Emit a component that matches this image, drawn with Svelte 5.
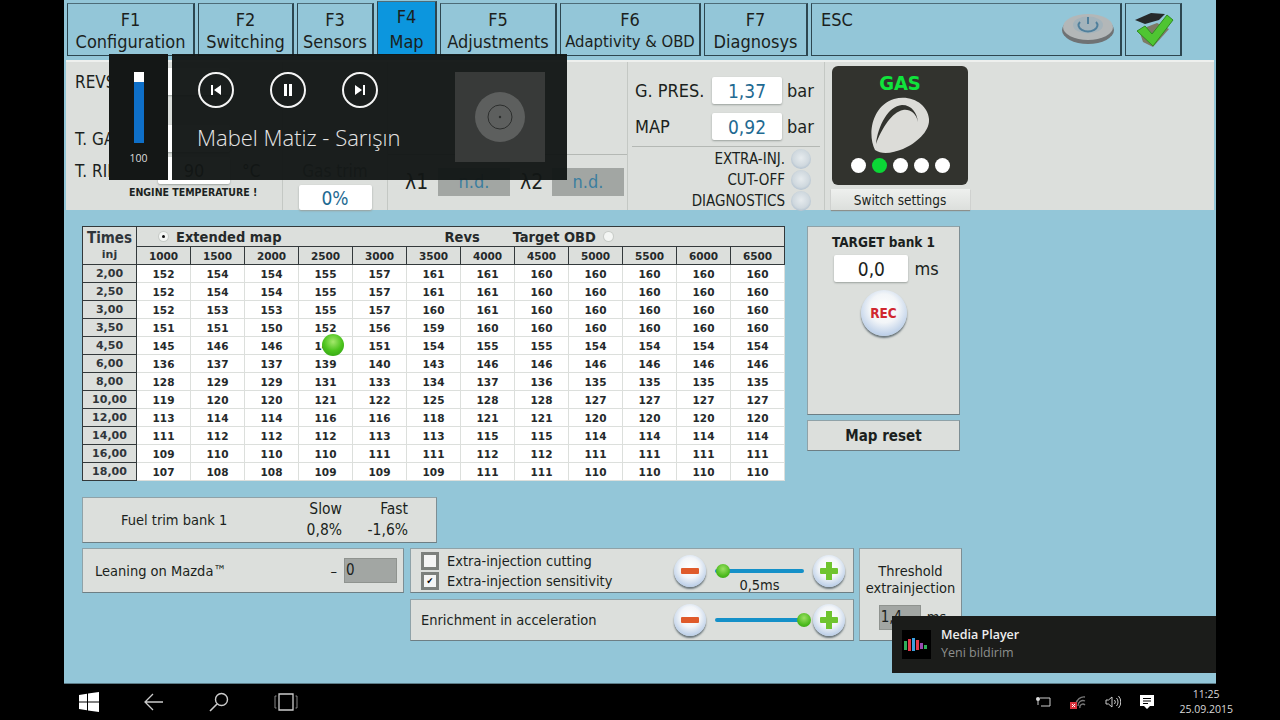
<script lang="ts">
	const tabs = [
		{ key: 'F1', label: 'Configuration' },
		{ key: 'F2', label: 'Switching' },
		{ key: 'F3', label: 'Sensors' },
		{ key: 'F4', label: 'Map', active: true },
		{ key: 'F5', label: 'Adjustments' },
		{ key: 'F6', label: 'Adaptivity & OBD', small: true },
		{ key: 'F7', label: 'Diagnosys' }
	];

	const revs = [1000, 1500, 2000, 2500, 3000, 3500, 4000, 4500, 5000, 5500, 6000, 6500];

	const map = [
		['2,00', 152, 154, 154, 155, 157, 161, 161, 160, 160, 160, 160, 160],
		['2,50', 152, 154, 154, 155, 157, 161, 161, 160, 160, 160, 160, 160],
		['3,00', 152, 153, 153, 155, 157, 160, 161, 160, 160, 160, 160, 160],
		['3,50', 151, 151, 150, 152, 156, 159, 160, 160, 160, 160, 160, 160],
		['4,50', 145, 146, 146, 148, 151, 154, 155, 155, 154, 154, 154, 154],
		['6,00', 136, 137, 137, 139, 140, 143, 146, 146, 146, 146, 146, 146],
		['8,00', 128, 129, 129, 131, 133, 134, 137, 136, 135, 135, 135, 135],
		['10,00', 119, 120, 120, 121, 122, 125, 128, 128, 127, 127, 127, 127],
		['12,00', 113, 114, 114, 116, 116, 118, 121, 121, 120, 120, 120, 120],
		['14,00', 111, 112, 112, 112, 113, 113, 115, 115, 114, 114, 114, 114],
		['16,00', 109, 110, 110, 110, 111, 111, 112, 112, 111, 111, 111, 111],
		['18,00', 107, 108, 108, 109, 109, 109, 111, 111, 110, 110, 110, 110]
	];

	const lights = ['EXTRA-INJ.', 'CUT-OFF', 'DIAGNOSTICS'];
	const positions = [false, true, false, false, false];
</script>

<div class="desktop">
	<main class="app">
		<nav class="tabs">
			{#each tabs as tab}
				<button class="tab" class:active={tab.active} class:small={tab.small}>
					<span>{tab.key}</span>
					<span class="tab-label">{tab.label}</span>
				</button>
			{/each}
			<div class="tab esc">
				<span>ESC</span>
				<svg class="power" viewBox="0 0 54 36" width="54" height="36">
					<ellipse cx="27" cy="20" rx="26" ry="14" fill="#6f7274" />
					<ellipse cx="27" cy="17" rx="25" ry="13" fill="#b3b7b8" />
					<ellipse cx="27" cy="15" rx="15" ry="8.5" fill="#a3b3bb" />
					<path d="M19 12a9.5 6 0 1 0 16 0" fill="none" stroke="#4f7f9c" stroke-width="2" />
					<path d="M27 7v7" stroke="#4f7f9c" stroke-width="2" />
				</svg>
			</div>
			<div class="tab check">
				<svg viewBox="0 0 44 42" width="44" height="42">
					<path d="M4 11 20 4l14 1-6 6-14 4z" fill="#26292a" />
					<path d="M8 21 26 14l12 6-16 18-10-5z" fill="#7e7a66" />
					<path d="M6 22l8-5 7 8L36 6l6 5-20 26z" fill="#4fc532" stroke="#2f8d22" />
				</svg>
			</div>
		</nav>

		<section class="status">
			<div class="temps">
				<div class="reading revs-row">
					<span class="name">REVS</span><span class="box"></span>
				</div>
				<div class="reading">
					<span class="name">T. GAS</span><span class="box"></span>
				</div>
				<div class="reading rid">
					<span class="name">T. RID.</span><span class="box">90</span><span class="unit">°C</span>
				</div>
				<p class="warning">ENGINE TEMPERATURE !</p>
			</div>

			<div class="trim">
				<span class="trim-title">Gas trim</span>
				<span class="box trim-box">0%</span>
			</div>

			<div class="lambda">
				<span class="lambda-name">λ1</span><span class="nd">n.d.</span>
				<span class="lambda-name second">λ2</span><span class="nd">n.d.</span>
			</div>

			<div class="pressure">
				<div class="pres-row">
					<span class="pres-name">G. PRES.</span><span class="box blue">1,37</span><span>bar</span>
				</div>
				<div class="pres-row">
					<span class="pres-name">MAP</span><span class="box blue">0,92</span><span>bar</span>
				</div>
				<div class="lights">
					{#each lights as light}
						<div class="light-row"><span>{light}</span><i class="led"></i></div>
					{/each}
				</div>
			</div>

			<div class="fuel">
				<div class="gas-card">
					<b>GAS</b>
					<svg viewBox="0 0 64 58" width="64" height="58">
						<path d="M7 54C-1 38 4 10 26 3c18-5 34 6 35 20 1 12-12 24-26 30-10 4-21 6-28 1z" fill="#dcdcd8" />
						<path d="M8 48C10 30 20 10 34 9c10 0 15 8 16 17-2-9-8-13-15-12C24 16 14 32 8 48z" fill="#32332e" />
					</svg>
					<div class="dots">
						{#each positions as on}
							<i class:on></i>
						{/each}
					</div>
				</div>
				<button class="switch">Switch settings</button>
			</div>
		</section>

		<section class="map-row">
			<div class="map-wrap">
				<table class="map">
					<thead>
						<tr>
							<th class="axis times" rowspan="2"><strong>Times</strong><span>inj</span></th>
							<th class="title" colspan="12">
								<div class="title-row">
									<i class="radio on"></i>
									<span class="ext">Extended map</span>
									<span class="rv">Revs</span>
									<span class="obd">Target OBD</span>
									<i class="radio"></i>
								</div>
							</th>
						</tr>
						<tr>
							{#each revs as r}<th class="rev">{r}</th>{/each}
						</tr>
					</thead>
					<tbody>
						{#each map as row}
							<tr>
								{#each row as v, i}
									{#if i === 0}<th class="axis">{v}</th>{:else}<td>{v}</td>{/if}
								{/each}
							</tr>
						{/each}
					</tbody>
				</table>
				<i class="cursor"></i>
			</div>

			<div class="target-col">
				<div class="panel target">
					<b>TARGET bank 1</b>
					<div class="target-val"><span class="box">0,0</span><span>ms</span></div>
					<button class="round rec">REC</button>
				</div>
				<button class="panel reset">Map reset</button>
			</div>
		</section>

		<section class="bottom">
			<div class="panel fuel-trim">
				<span class="ft-name">Fuel trim bank 1</span>
				<div class="ft-col"><span>Slow</span><span>0,8%</span></div>
				<div class="ft-col"><span>Fast</span><span>-1,6%</span></div>
			</div>

			<div class="controls">
				<div class="panel leaning">
					<span>Leaning on Mazda™</span>
					<span class="dash">–</span>
					<span class="grey-box">0</span>
				</div>

				<div class="mid">
					<div class="panel extra">
						<div class="checks">
							<label><i class="cb"></i>Extra-injection cutting</label>
							<label><i class="cb ticked">✔</i>Extra-injection sensitivity</label>
						</div>
						<div class="stepper">
							<button class="round step minus" aria-label="less"><i></i></button>
							<div class="track"><i class="thumb low"></i><span class="slider-val">0,5ms</span></div>
							<button class="round step plus" aria-label="more"><i></i></button>
						</div>
					</div>
					<div class="panel extra enrich">
						<span>Enrichment in acceleration</span>
						<div class="stepper">
							<button class="round step minus" aria-label="less"><i></i></button>
							<div class="track"><i class="thumb high"></i></div>
							<button class="round step plus" aria-label="more"><i></i></button>
						</div>
					</div>
				</div>

				<div class="panel threshold">
					<span>Threshold<br />extrainjection</span>
					<div class="th-val"><span class="grey-box">1,4</span><span>ms</span></div>
				</div>
			</div>
		</section>
	</main>

	<footer class="taskbar">
		<div class="task-left">
			<svg viewBox="0 0 20 20" width="20" height="20"><path d="M0 3l8-1.2V9.400H0zM9 1.600 20 0v9.400H9zM0 10.600h8v7.600l-8-1.200zM9 10.600h11V20L9 18.400z" fill="#fff" /></svg>
			<svg viewBox="0 0 20 18" width="20" height="18"><path d="M9 1 1 9l8 8M1 9h18" fill="none" stroke="#ccc" stroke-width="1.300" /></svg>
			<svg viewBox="0 0 20 20" width="20" height="20"><circle cx="12.500" cy="7.500" r="6" fill="none" stroke="#ccc" stroke-width="1.400" /><path d="M8 12 1 19" stroke="#ccc" stroke-width="1.600" /></svg>
			<svg viewBox="0 0 24 18" width="24" height="18"><path d="M5 1h14v16H5z" fill="none" stroke="#ccc" stroke-width="1.300" /><path d="M2.500 3H1v12h1.500M21.500 3H23v12h-1.500" fill="none" stroke="#888" /></svg>
		</div>
		<div class="tray">
			<svg viewBox="0 0 16 12" width="16" height="12"><path d="M5 2h10v8H6" fill="none" stroke="#ccc" /><circle cx="3" cy="3" r="2" fill="#ddd" /><path d="M3 4v5" stroke="#ccc" /></svg>
			<svg viewBox="0 0 18 14" width="18" height="14"><path d="M7 9a8 8 0 0 1 9-7M9 11a5 5 0 0 1 7-5M11 13a3 3 0 0 1 5-3" fill="none" stroke="#777" stroke-width="1.300" /><rect x="1" y="7" width="7" height="7" fill="#d8323c" /><path d="M3 9l3 3M6 9l-3 3" stroke="#fff" /></svg>
			<svg viewBox="0 0 16 14" width="16" height="14"><path d="M1 5h2.500L7 2v10L3.500 9H1z" fill="none" stroke="#ccc" /><path d="M9.500 5a3 3 0 0 1 0 4M11.500 3a6 6 0 0 1 0 8M13.500 1a9 9 0 0 1 0 12" fill="none" stroke="#ccc" /></svg>
			<svg viewBox="0 0 16 16" width="16" height="16"><path d="M1 1h14v11h-4l-3 3-3-3H1z" fill="#fff" /><path d="M4 4.500h8M4 7h8M4 9.500h5" stroke="#000" /></svg>
			<div class="clock"><span>11:25</span><span>25.09.2015</span></div>
		</div>
	</footer>

	<aside class="volume">
		<div class="vol-bar"><i></i></div>
		<span>100</span>
	</aside>

	<aside class="media">
		<div class="media-left">
			<div class="media-btns">
				<button aria-label="previous"><svg viewBox="0 0 14 14" width="14" height="14"><path d="M2 2h2v10H2zM12 2v10L5 7z" fill="#fff" /></svg></button>
				<button aria-label="pause"><svg viewBox="0 0 14 14" width="14" height="14"><path d="M3 1h3v12H3zM8 1h3v12H8z" fill="#fff" /></svg></button>
				<button aria-label="next"><svg viewBox="0 0 14 14" width="14" height="14"><path d="M2 2v10l7-5zM10 2h2v10h-2z" fill="#fff" /></svg></button>
			</div>
			<p>Mabel Matiz - Sarışın</p>
		</div>
		<div class="album">
			<svg viewBox="0 0 50 50" width="50" height="50">
				<circle cx="25" cy="25" r="25" fill="#5d5f5e" />
				<circle cx="25" cy="25" r="12" fill="none" stroke="#2c2e2d" stroke-width="1" />
				<circle cx="25" cy="25" r="1.200" fill="#2c2e2d" />
			</svg>
		</div>
	</aside>

	<aside class="toast">
		<div class="toast-icon">
			<svg viewBox="0 0 28 28" width="28" height="28">
				<rect x="2" y="11" width="3" height="9" fill="#2fae5a" />
				<rect x="6" y="9" width="3" height="12" fill="#e23a4a" />
				<rect x="10" y="8" width="3" height="13" fill="#3aa0e0" />
				<rect x="14" y="10" width="3" height="10" fill="#e23a4a" />
				<rect x="18" y="13" width="3" height="6" fill="#9a4ab0" />
				<rect x="22" y="15" width="3" height="4" fill="#2fae5a" />
			</svg>
		</div>
		<div class="toast-text">
			<b>Media Player</b>
			<span>Yeni bildirim</span>
		</div>
	</aside>
</div>

<style>
	:global(body) {
		margin: 0;
		background: #000;
	}
	.desktop {
		position: relative;
		width: 1280px;
		height: 720px;
		overflow: hidden;
		background: #000;
		font-family: 'DejaVu Sans Condensed', 'DejaVu Sans', sans-serif;
		color: #1b1f20;
	}
	.app {
		margin-left: 64px;
		width: 1152px;
		height: 684px;
		background: #93c6d8;
		border-bottom: 1px solid #5c7c88;
		box-sizing: border-box;
		padding-top: 3px;
	}
	button {
		font-family: inherit;
		color: inherit;
		padding: 0;
		margin: 0;
	}

	/* tab bar */
	.tabs {
		display: grid;
		grid-template-columns: 128px 96px 77px 60px 117px 141px 104px 311px 57px;
		gap: 3px;
		margin-left: 3px;
		height: 53px;
	}
	.tab {
		display: flex;
		flex-direction: column;
		align-items: center;
		justify-content: flex-start;
		box-sizing: border-box;
		height: 53px;
		padding-top: 5px;
		background: #93c6d8;
		border: 1px solid #2d4650;
		border-top-color: #4d6c78;
		border-right-width: 2px;
		font-size: 18px;
		line-height: 22px;
		white-space: nowrap;
	}
	.tab.active {
		height: 54px;
		margin-top: -2px;
		background: #0c96de;
		padding-top: 4px;
	}
	.tab.active .tab-label {
		margin-top: 3px;
	}
	.tab.small .tab-label {
		font-size: 16.500px;
	}
	.esc {
		position: relative;
		align-items: flex-start;
		padding-left: 9px;
	}
	.power {
		position: absolute;
		right: 5px;
		top: 6px;
	}
	.check {
		justify-content: center;
		padding-top: 0;
	}

	/* status strip */
	.status {
		display: flex;
		box-sizing: border-box;
		height: 150px;
		margin: 4px 2px 0;
		background: #dcdfdc;
		border-top: 2px solid #eef0ee;
		font-size: 17px;
	}
	.box {
		display: flex;
		align-items: center;
		justify-content: center;
		box-sizing: border-box;
		background: #fff;
		border-radius: 2px;
		box-shadow: 0 1px 2px #9aa09c;
		font-size: 18px;
	}
	.box.blue {
		color: #1f6a92;
	}
	.temps {
		position: relative;
		box-sizing: border-box;
		width: 217px;
		padding: 6px 0 0 9px;
		border-right: 1px solid #c4c8c4;
	}
	.reading {
		display: flex;
		align-items: center;
		height: 27px;
	}
	.reading + .reading {
		margin-top: 5px;
	}
	.revs-row {
		margin-bottom: 30px;
	}
	.name {
		width: 83px;
		flex: none;
	}
	.reading .box {
		width: 72px;
		height: 27px;
	}
	.unit {
		margin-left: 12px;
	}
	.warning {
		margin: 2px 0 0 54px;
		font-size: 10.500px;
		font-weight: 700;
		font-family: 'DejaVu Sans', sans-serif;
		white-space: nowrap;
		transform-origin: left;
		transform: scaleX(0.9);
	}
	.trim {
		display: flex;
		flex-direction: column;
		align-items: center;
		justify-content: flex-end;
		box-sizing: border-box;
		width: 105px;
		padding-bottom: 0;
		border-right: 1px solid #c4c8c4;
		color: #5d6260;
	}
	.trim-title {
		margin-bottom: 4px;
	}
	.trim-box {
		width: 73px;
		height: 25px;
		color: #1f6a92;
		font-size: 19px;
	}
	.lambda {
		display: flex;
		align-items: center;
		align-self: flex-end;
		box-sizing: border-box;
		width: 239px;
		height: 56px;
		margin-bottom: 0;
		padding: 13px 3px 14px 17px;
		border-top: 1px solid #b4b8b4;
		font-size: 21px;
	}
	.lambda-name {
		width: 33px;
		flex: none;
	}
	.lambda-name.second {
		width: 32px;
		margin-left: 10px;
	}
	.nd {
		width: 72px;
		height: 28px;
		flex: none;
		background: #a2a6a3;
		color: #3c7e9f;
		font-size: 18px;
		line-height: 28px;
		text-align: center;
	}
	.pressure {
		box-sizing: border-box;
		width: 198px;
		padding: 15px 4px 0 4px;
		border-left: 1px solid #c4c8c4;
		border-right: 1px solid #c4c8c4;
		font-size: 18px;
	}
	.pres-row {
		display: flex;
		align-items: center;
		height: 27px;
		margin-bottom: 9px;
		padding-left: 3px;
	}
	.pres-row + .pres-row {
		margin-bottom: 0;
	}
	.pres-name {
		width: 77px;
		flex: none;
	}
	.pres-row .box {
		width: 70px;
		height: 27px;
		margin-right: 5px;
		font-size: 19px;
	}
	.lights {
		margin-top: 6px;
		padding-top: 1px;
		border-top: 1px solid #b4b8b4;
		font-size: 15px;
	}
	.light-row {
		display: flex;
		align-items: center;
		justify-content: flex-end;
		gap: 6px;
		height: 21px;
		padding-right: 9px;
	}
	.led {
		width: 20px;
		height: 20px;
		border-radius: 50%;
		background: radial-gradient(circle at 50% 45%, #e6ebee 0, #cfd8de 55%, #8da4bc 100%);
	}
	.fuel {
		display: flex;
		flex-direction: column;
		align-items: center;
		width: 138px;
		margin-left: 6px;
		padding-top: 4px;
	}
	.gas-card {
		display: flex;
		flex-direction: column;
		align-items: center;
		width: 136px;
		height: 119px;
		background: #32332e;
		border-radius: 6px;
		color: #10e43c;
	}
	.gas-card b {
		font-size: 20px;
		line-height: 24px;
		margin-top: 5px;
	}
	.gas-card svg {
		margin-top: 1px;
	}
	.dots {
		display: flex;
		gap: 6px;
		margin-top: 4px;
	}
	.dots i {
		width: 15px;
		height: 15px;
		border-radius: 50%;
		background: #fff;
	}
	.dots i.on {
		background: #0bd636;
	}
	.switch {
		width: 139px;
		height: 21px;
		margin-top: 4px;
		border: 0;
		background: linear-gradient(#eef0ee, #dcdfdc);
		box-shadow: 0 1px 1px #8c908c;
		font-size: 13.500px;
	}

	/* map table */
	.map-row {
		display: flex;
		align-items: flex-start;
		gap: 22px;
		margin: 16px 0 0 18px;
	}
	.map-wrap {
		position: relative;
	}
	.map {
		border-collapse: collapse;
		table-layout: fixed;
		width: 703px;
		font-family: 'DejaVu Sans', sans-serif;
		font-size: 10.500px;
		font-weight: 700;
	}
	.map th,
	.map td {
		box-sizing: border-box;
		height: 18px;
		padding: 0;
		text-align: center;
		line-height: 16px;
		color: #25292a;
	}
	.map td {
		background: #fff;
		border: 1px solid #dcdfdc;
		width: 54px;
	}
	.map th.axis {
		width: 54px;
		background: #dcdfdc;
		border: 1px solid #33393b;
		color: #30353a;
		font-size: 11px;
	}
	.map th.times {
		padding-top: 2px;
		height: 38px;
		vertical-align: top;
	}
	.times strong {
		display: block;
		font-family: 'DejaVu Sans Condensed', 'DejaVu Sans', sans-serif;
		font-size: 15px;
		line-height: 18px;
	}
	.times span {
		display: block;
		line-height: 16px;
	}
	.map th.title {
		height: 20px;
		background: #dcdfdc;
		border: 1px solid #33393b;
		border-left: 0;
	}
	.title-row {
		display: flex;
		align-items: center;
		padding-left: 22px;
		font-family: 'DejaVu Sans Condensed', 'DejaVu Sans', sans-serif;
		font-size: 14.500px;
	}
	.radio {
		width: 9px;
		height: 9px;
		border-radius: 50%;
		background: #f4f6f4;
		box-shadow: 0 0 0 1px #c8ccc8;
		position: relative;
	}
	.radio.on::after {
		content: '';
		position: absolute;
		inset: 3px;
		border-radius: 50%;
		background: #111;
	}
	.ext {
		margin-left: 8px;
	}
	.rv {
		margin-left: 163px;
	}
	.obd {
		margin-left: 33px;
		margin-right: 8px;
	}
	.map th.rev {
		background: #dcdfdc;
		border: 1px solid #33393b;
		border-top-color: #33393b;
		width: 54px;
	}
	.cursor {
		position: absolute;
		left: 240px;
		top: 108px;
		width: 22px;
		height: 22px;
		border-radius: 50%;
		background: radial-gradient(circle at 50% 35%, #a4e86c 0, #4dc41e 50%, #2a9a10 100%);
	}

	.panel {
		box-sizing: border-box;
		background: #dcdfdc;
		border: 1px solid #8fa2a8;
		border-bottom-color: #6d7e84;
		border-right-color: #7d8e94;
	}
	.target-col {
		display: flex;
		flex-direction: column;
		gap: 5px;
		width: 153px;
	}
	.target {
		display: flex;
		flex-direction: column;
		align-items: center;
		height: 189px;
		padding-top: 5px;
		font-size: 13px;
	}
	.target b {
		font-size: 13.500px;
		line-height: 20px;
	}
	.target-val {
		display: flex;
		align-items: center;
		gap: 6px;
		margin: 3px 0 0 6px;
		font-size: 18px;
	}
	.target-val .box {
		width: 74px;
		height: 27px;
		font-size: 19px;
	}
	.round {
		border: 0;
		border-radius: 50%;
		background: radial-gradient(circle at 50% 40%, #fff 0, #f2f5f8 40%, #bccfe8 75%, #7c93b4 100%);
		box-shadow: 0 2px 2px #68747a;
	}
	.rec {
		width: 46px;
		height: 46px;
		margin-top: 8px;
		color: #d0272f;
		font-size: 13.500px;
		font-weight: 700;
	}
	.reset {
		height: 31px;
		font-size: 15px;
		font-weight: 700;
	}

	/* bottom panels */
	.bottom {
		margin: 16px 0 0 18px;
		font-size: 15px;
	}
	.fuel-trim {
		display: flex;
		align-items: center;
		width: 355px;
		height: 46px;
	}
	.ft-name {
		width: 219px;
		padding-left: 38px;
		box-sizing: border-box;
		font-size: 14.500px;
	}
	.ft-col {
		display: flex;
		flex-direction: column;
		align-items: flex-end;
		width: 40px;
		line-height: 21px;
		font-size: 15.500px;
	}
	.ft-col + .ft-col {
		width: 66px;
		margin-left: 0;
	}
	.controls {
		display: flex;
		align-items: flex-start;
		gap: 6px;
		margin-top: 5px;
	}
	.leaning {
		display: flex;
		align-items: center;
		width: 322px;
		height: 45px;
		padding-left: 12px;
		font-size: 14.500px;
	}
	.dash {
		margin-left: auto;
		margin-right: 7px;
	}
	.grey-box {
		width: 53px;
		height: 25px;
		margin-right: 6px;
		background: #a2a6a3;
		border: 1px solid #8f938f;
		box-sizing: border-box;
		font-size: 15px;
		line-height: 23px;
		padding-left: 1px;
	}
	.mid {
		display: flex;
		flex-direction: column;
		gap: 6px;
		width: 444px;
	}
	.extra {
		display: flex;
		align-items: center;
		justify-content: space-between;
		height: 45px;
		padding: 0 8px 0 10px;
		font-size: 14.500px;
		position: relative;
	}
	.enrich {
		height: 42px;
	}
	.checks label {
		display: flex;
		align-items: center;
		height: 20px;
		gap: 8px;
	}
	.cb {
		display: block;
		width: 18px;
		height: 18px;
		box-sizing: border-box;
		border: 3px solid #7c807c;
		background: #f4f5f4;
		font-style: normal;
		font-size: 9px;
		line-height: 12px;
		text-align: center;
		color: #000;
	}
	.stepper {
		display: flex;
		align-items: center;
		gap: 9px;
	}
	.step {
		position: relative;
		width: 32px;
		height: 32px;
	}
	.step i {
		position: absolute;
		left: 7px;
		top: 13px;
		width: 18px;
		height: 6px;
		background: #df5a2a;
		border-radius: 1px;
	}
	.plus i {
		background: #6fc42f;
	}
	.plus i::after {
		content: '';
		position: absolute;
		left: 6px;
		top: -6px;
		width: 6px;
		height: 18px;
		background: #6fc42f;
	}
	.track {
		position: relative;
		width: 89px;
		height: 4px;
		background: #1490c8;
		border-radius: 2px;
	}
	.thumb {
		position: absolute;
		top: -5px;
		width: 14px;
		height: 14px;
		border-radius: 50%;
		background: radial-gradient(circle at 50% 35%, #9be063 0, #4dbb1e 60%, #2f9a14 100%);
	}
	.thumb.low {
		left: 1px;
	}
	.thumb.high {
		right: -7px;
	}
	.slider-val {
		position: absolute;
		left: 0;
		right: 0;
		top: 8px;
		text-align: center;
		font-size: 14.500px;
	}
	.threshold {
		display: flex;
		flex-direction: column;
		align-items: center;
		width: 103px;
		height: 93px;
		padding-top: 14px;
		margin-left: -1px;
		font-size: 14.500px;
		line-height: 17px;
		text-align: center;
	}
	.th-val {
		display: flex;
		align-items: center;
		gap: 6px;
		margin-top: 8px;
		margin-left: 4px;
	}
	.th-val .grey-box {
		width: 42px;
		margin-right: 0;
		text-align: left;
	}

	/* taskbar */
	.taskbar {
		display: flex;
		align-items: center;
		justify-content: space-between;
		height: 36px;
		padding-left: 79px;
		box-sizing: border-box;
	}
	.task-left {
		display: flex;
		align-items: center;
		gap: 45px;
	}
	.tray {
		display: flex;
		align-items: center;
		gap: 18px;
		padding-right: 47px;
	}
	.clock {
		display: flex;
		flex-direction: column;
		align-items: center;
		margin-left: 6px;
		color: #d8d8d8;
		font-family: 'Open Sans', sans-serif;
		font-size: 10.500px;
		line-height: 15px;
	}

	/* windows overlays */
	.volume {
		position: absolute;
		left: 109px;
		top: 54px;
		width: 59px;
		height: 126px;
		display: flex;
		flex-direction: column;
		align-items: center;
		background: #141716;
		color: #ddd;
		font-family: 'Open Sans', sans-serif;
		font-size: 10.500px;
	}
	.vol-bar {
		width: 10px;
		height: 71px;
		margin-top: 18px;
		padding-top: 10px;
		box-sizing: border-box;
		background: #fff;
	}
	.vol-bar i {
		display: block;
		height: 100%;
		background: #0e6fc8;
	}
	.volume span {
		margin-top: 8px;
	}
	.media {
		position: absolute;
		left: 172px;
		top: 54px;
		width: 395px;
		height: 126px;
		display: flex;
		justify-content: space-between;
		box-sizing: border-box;
		padding: 18px 22px 0 25px;
		background: rgba(18, 22, 21, 0.96);
		color: #e6e6e6;
		font-family: 'Open Sans', sans-serif;
	}
	.media-btns {
		display: flex;
		gap: 36px;
		margin-left: 1px;
	}
	.media-btns button {
		display: flex;
		align-items: center;
		justify-content: center;
		width: 36px;
		height: 36px;
		border: 2px solid #f4f4f4;
		border-radius: 50%;
		background: none;
	}
	.media p {
		margin: 14px 0 0;
		font-size: 22px;
		font-weight: 300;
		line-height: 30px;
		white-space: nowrap;
	}
	.album {
		display: flex;
		align-items: center;
		justify-content: center;
		width: 90px;
		height: 90px;
		background: #383a39;
	}
	.toast {
		position: absolute;
		left: 892px;
		top: 616px;
		width: 324px;
		height: 57px;
		display: flex;
		align-items: center;
		gap: 10px;
		padding-left: 10px;
		box-sizing: border-box;
		background: #1b1c1a;
		font-family: 'Open Sans', sans-serif;
	}
	.toast-icon {
		width: 29px;
		height: 29px;
		background: #000;
	}
	.toast-text {
		display: flex;
		flex-direction: column;
		margin-top: -2px;
		font-size: 12.500px;
		line-height: 18px;
	}
	.toast-text b {
		color: #eee;
		font-weight: 600;
	}
	.toast-text span {
		color: #8d8f8d;
	}
</style>
